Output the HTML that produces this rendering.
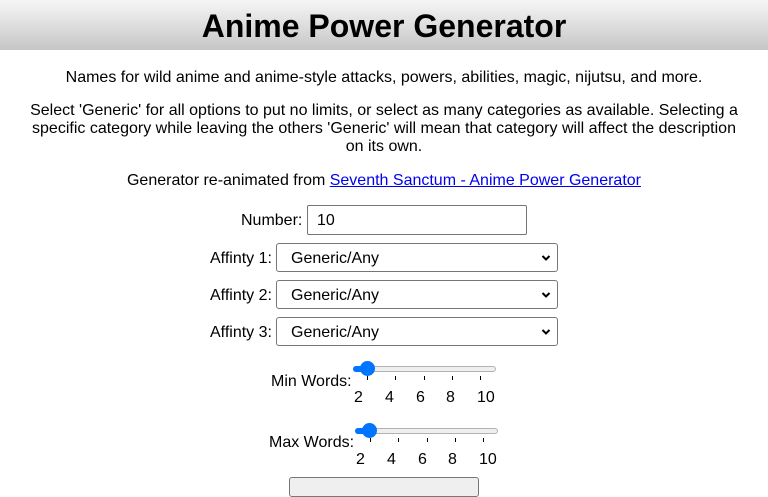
<!DOCTYPE html>
<html><head><style>
body{margin:0;width:768px;height:480px;overflow:hidden;font-family:"Liberation Sans",sans-serif;font-size:16px;color:#000;background:#fff;position:relative}
.a{position:absolute;white-space:nowrap}
.hd{position:absolute;left:0;top:0;width:768px;height:50px;background:linear-gradient(#f6f6f6,#c6c6c6);}
.hd div{text-align:center;font-weight:bold;font-size:32px;line-height:52px}
.c{position:absolute;left:0;width:768px;text-align:center;line-height:18px}
.box{position:absolute;border:1px solid #767676;border-radius:2px;background:#fff;box-sizing:border-box}
.sel{border-radius:3px}
.sel span{position:absolute;left:14px;top:6px}
.sel svg{position:absolute;right:6px;top:10px}
.trk{position:absolute;height:6px;background:#efefef;border:1px solid #b2b2b2;border-radius:4px;box-sizing:border-box}
.fill{position:absolute;height:6px;background:#0075ff;border-radius:4px}
.th{position:absolute;width:15px;height:15px;border-radius:50%;background:#0075ff}
.tk{position:absolute;width:1px;height:4px;background:#000}
</style></head><body>
<div class="hd"><div>Anime Power Generator</div></div>
<div class="c" style="top:69px">Names for wild anime and anime-style attacks, powers, abilities, magic, nijutsu, and more.</div>
<div class="c" style="top:102px">Select 'Generic' for all options to put no limits, or select as many categories as available. Selecting a<br>specific category while leaving the others 'Generic' will mean that category will affect the description<br>on its own.</div>
<div class="c" style="top:172px">Generator re-animated from <span style="color:#00e;text-decoration:underline">Seventh Sanctum - Anime Power Generator</span></div>
<div class="a" style="left:241px;top:212px">Number:</div>
<div class="box" style="left:307px;top:205px;width:220px;height:30px"><span class="a" style="left:9px;top:6px">10</span></div>
<div class="a" style="left:210px;top:250px">Affinty 1:</div>
<div class="box sel" style="left:276px;top:243px;width:282px;height:29px"><span>Generic/Any</span><svg width="10" height="8" viewBox="0 0 10 8"><path d="M1.5 2 L5 5.5 L8.5 2" stroke="#000" stroke-width="2" fill="none"/></svg></div>
<div class="a" style="left:210px;top:287px">Affinty 2:</div>
<div class="box sel" style="left:276px;top:280px;width:282px;height:29px"><span>Generic/Any</span><svg width="10" height="8" viewBox="0 0 10 8"><path d="M1.5 2 L5 5.5 L8.5 2" stroke="#000" stroke-width="2" fill="none"/></svg></div>
<div class="a" style="left:210px;top:324px">Affinty 3:</div>
<div class="box sel" style="left:276px;top:317px;width:282px;height:29px"><span>Generic/Any</span><svg width="10" height="8" viewBox="0 0 10 8"><path d="M1.5 2 L5 5.5 L8.5 2" stroke="#000" stroke-width="2" fill="none"/></svg></div>

<div class="a" style="left:271px;top:373px">Min Words:</div>
<div class="trk" style="left:353px;top:366px;width:143px"></div>
<div class="fill" style="left:353px;top:366px;width:14px"></div>
<div class="th" style="left:360px;top:361px"></div>
<div class="tk" style="left:367px;top:376px"></div><div class="tk" style="left:395px;top:376px"></div><div class="tk" style="left:424px;top:376px"></div><div class="tk" style="left:452px;top:376px"></div><div class="tk" style="left:480px;top:376px"></div>
<div class="a" style="left:354px;top:389px">2</div><div class="a" style="left:385px;top:389px">4</div><div class="a" style="left:416px;top:389px">6</div><div class="a" style="left:446px;top:389px">8</div><div class="a" style="left:477px;top:389px">10</div>

<div class="a" style="left:269px;top:434px">Max Words:</div>
<div class="trk" style="left:355px;top:428px;width:143px"></div>
<div class="fill" style="left:355px;top:428px;width:14px"></div>
<div class="th" style="left:362px;top:423px"></div>
<div class="tk" style="left:370px;top:438px"></div><div class="tk" style="left:398px;top:438px"></div><div class="tk" style="left:427px;top:438px"></div><div class="tk" style="left:455px;top:438px"></div><div class="tk" style="left:483px;top:438px"></div>
<div class="a" style="left:356px;top:451px">2</div><div class="a" style="left:387px;top:451px">4</div><div class="a" style="left:418px;top:451px">6</div><div class="a" style="left:448px;top:451px">8</div><div class="a" style="left:479px;top:451px">10</div>

<div class="box" style="left:289px;top:477px;width:190px;height:20px;border-radius:3px;background:#efefef"></div>
</body></html>
